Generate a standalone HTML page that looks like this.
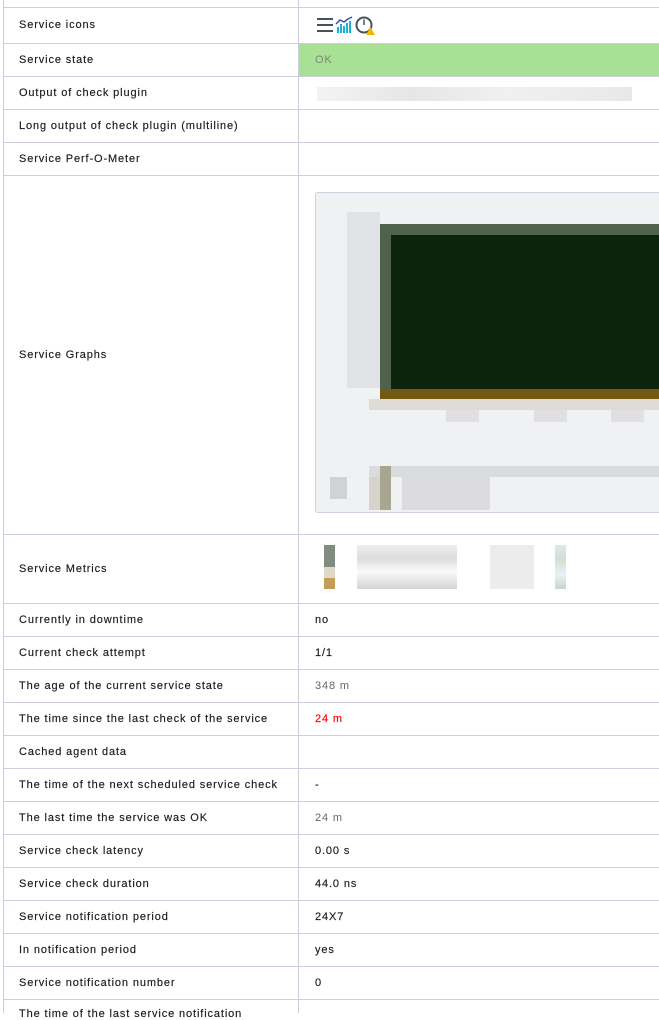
<!DOCTYPE html>
<html><head><meta charset="utf-8"><style>
body{margin:0;width:659px;height:1013px;overflow:hidden;background:#fff;font-family:"Liberation Sans",sans-serif;position:relative}
.l{position:absolute;left:3px;right:0;height:1px;background:#cdcde0}
.t{position:absolute;font-size:11px;color:#1a1a1a;letter-spacing:.88px;white-space:nowrap;margin-top:0px;-webkit-text-stroke:.15px #1a1a1a}
.k{left:19px}.v{left:315px}
.b{position:absolute}
</style></head><body>
<div class="b" style="left:3px;top:0;width:1px;height:1013px;background:#cdcde0"></div>
<div class="b" style="left:298px;top:0;width:1px;height:1013px;background:#cdcde0"></div>
<div class="b" style="left:299px;top:44px;width:360px;height:32px;background:#a8e096"></div>
<div class="l" style="top:7px"></div><div class="l" style="top:43px"></div><div class="l" style="top:76px"></div><div class="l" style="top:109px"></div><div class="l" style="top:142px"></div><div class="l" style="top:175px"></div><div class="l" style="top:534px"></div><div class="l" style="top:603px"></div><div class="l" style="top:636px"></div><div class="l" style="top:669px"></div><div class="l" style="top:702px"></div><div class="l" style="top:735px"></div><div class="l" style="top:768px"></div><div class="l" style="top:801px"></div><div class="l" style="top:834px"></div><div class="l" style="top:867px"></div><div class="l" style="top:900px"></div><div class="l" style="top:933px"></div><div class="l" style="top:966px"></div><div class="l" style="top:999px"></div>

<div class="t k" style="top:19px">Service icons</div>
<svg class="b" style="left:316px;top:15px" width="62" height="22">
<g stroke="#45535d" stroke-width="2"><line x1="1" y1="4" x2="17" y2="4"/><line x1="1" y1="10" x2="17" y2="10"/><line x1="1" y1="16" x2="17" y2="16"/></g>
<g fill="#1ab0d6"><rect x="21" y="12" width="2" height="6"/><rect x="24" y="9" width="2" height="9"/><rect x="27" y="11" width="2" height="7"/><rect x="30" y="8" width="2" height="10"/><rect x="33" y="6" width="2" height="12"/></g>
<polyline points="20,9 24,5 28,7 32,4 36,2" fill="none" stroke="#3a4ab0" stroke-width="1.5"/>
<circle cx="48" cy="10" r="7.5" fill="#fff" stroke="#45535d" stroke-width="2"/><line x1="48" y1="4.5" x2="48" y2="10" stroke="#45535d" stroke-width="1.5"/>
<polygon points="50,20 59,20 54.5,12" fill="#f5b800"/>
</svg>
<div class="t k" style="top:54px">Service state</div><div class="t v" style="top:54px;color:#7a8a72;-webkit-text-stroke:0">OK</div>
<div class="t k" style="top:87px">Output of check plugin</div>
<div class="b" style="left:317px;top:87px;width:315px;height:14px;background:linear-gradient(90deg,#f3f3f3,#e6e6e6 30%,#f0f0f0 60%,#e8e8e8)"></div>
<div class="t k" style="top:120px">Long output of check plugin (multiline)</div>
<div class="t k" style="top:153px">Service Perf-O-Meter</div>
<div class="t k" style="top:349px">Service Graphs</div>
<div class="b" style="left:315px;top:192px;width:350px;height:319px;background:#f0f1f3;border:1px solid #cfcfe0;border-radius:3px"></div>
<div class="b" style="left:347px;top:212px;width:33px;height:176px;background:#e2e3e6"></div>
<div class="b" style="left:380px;top:224px;width:279px;height:175px;background:#50614c"></div>
<div class="b" style="left:391px;top:235px;width:268px;height:154px;background:#0c240b"></div>
<div class="b" style="left:380px;top:389px;width:279px;height:10px;background:#735a12"></div>
<div class="b" style="left:369px;top:399px;width:290px;height:11px;background:#dfdbd5"></div>
<div class="b" style="left:446px;top:410px;width:33px;height:12px;background:#e0e0e3"></div>
<div class="b" style="left:534px;top:410px;width:33px;height:12px;background:#e0e0e3"></div>
<div class="b" style="left:611px;top:410px;width:33px;height:12px;background:#e0e0e3"></div>
<div class="b" style="left:369px;top:466px;width:290px;height:11px;background:#dadbdd"></div>
<div class="b" style="left:369px;top:477px;width:22px;height:33px;background:#d5d3cc"></div>
<div class="b" style="left:380px;top:466px;width:11px;height:44px;background:#a8a590"></div>
<div class="b" style="left:402px;top:477px;width:88px;height:33px;background:#dcdcde"></div>
<div class="b" style="left:330px;top:477px;width:17px;height:22px;background:#cfd3d6"></div>
<div class="t k" style="top:563px">Service Metrics</div>
<div class="b" style="left:324px;top:545px;width:11px;height:44px;background:linear-gradient(#818c80 50%,#e2d8c6 50%,#e2d8c6 75%,#c49d58 75%)"></div>
<div class="b" style="left:357px;top:545px;width:100px;height:44px;background:linear-gradient(#eee,#ddd 30%,#fafafa 60%,#d4d4d4)"></div>
<div class="b" style="left:490px;top:545px;width:44px;height:44px;background:#ececec"></div>
<div class="b" style="left:555px;top:545px;width:11px;height:44px;background:linear-gradient(#e2e4f0,#cfe2d2,#eeeef8,#c2d8c8)"></div>
<div class="t k" style="top:614px">Currently in downtime</div><div class="t v" style="top:614px">no</div>
<div class="t k" style="top:647px">Current check attempt</div><div class="t v" style="top:647px">1/1</div>
<div class="t k" style="top:680px">The age of the current service state</div><div class="t v" style="top:680px;color:#666;-webkit-text-stroke:0">348 m</div>
<div class="t k" style="top:713px">The time since the last check of the service</div><div class="t v" style="top:713px;color:#f00;-webkit-text-stroke:.15px #f00">24 m</div>
<div class="t k" style="top:746px">Cached agent data</div>
<div class="t k" style="top:779px">The time of the next scheduled service check</div><div class="t v" style="top:779px">-</div>
<div class="t k" style="top:812px">The last time the service was OK</div><div class="t v" style="top:812px;color:#666;-webkit-text-stroke:0">24 m</div>
<div class="t k" style="top:845px">Service check latency</div><div class="t v" style="top:845px">0.00 s</div>
<div class="t k" style="top:878px">Service check duration</div><div class="t v" style="top:878px">44.0 ns</div>
<div class="t k" style="top:911px">Service notification period</div><div class="t v" style="top:911px">24X7</div>
<div class="t k" style="top:944px">In notification period</div><div class="t v" style="top:944px">yes</div>
<div class="t k" style="top:977px">Service notification number</div><div class="t v" style="top:977px">0</div>
<div class="t k" style="top:1008px">The time of the last service notification</div>
</body></html>
